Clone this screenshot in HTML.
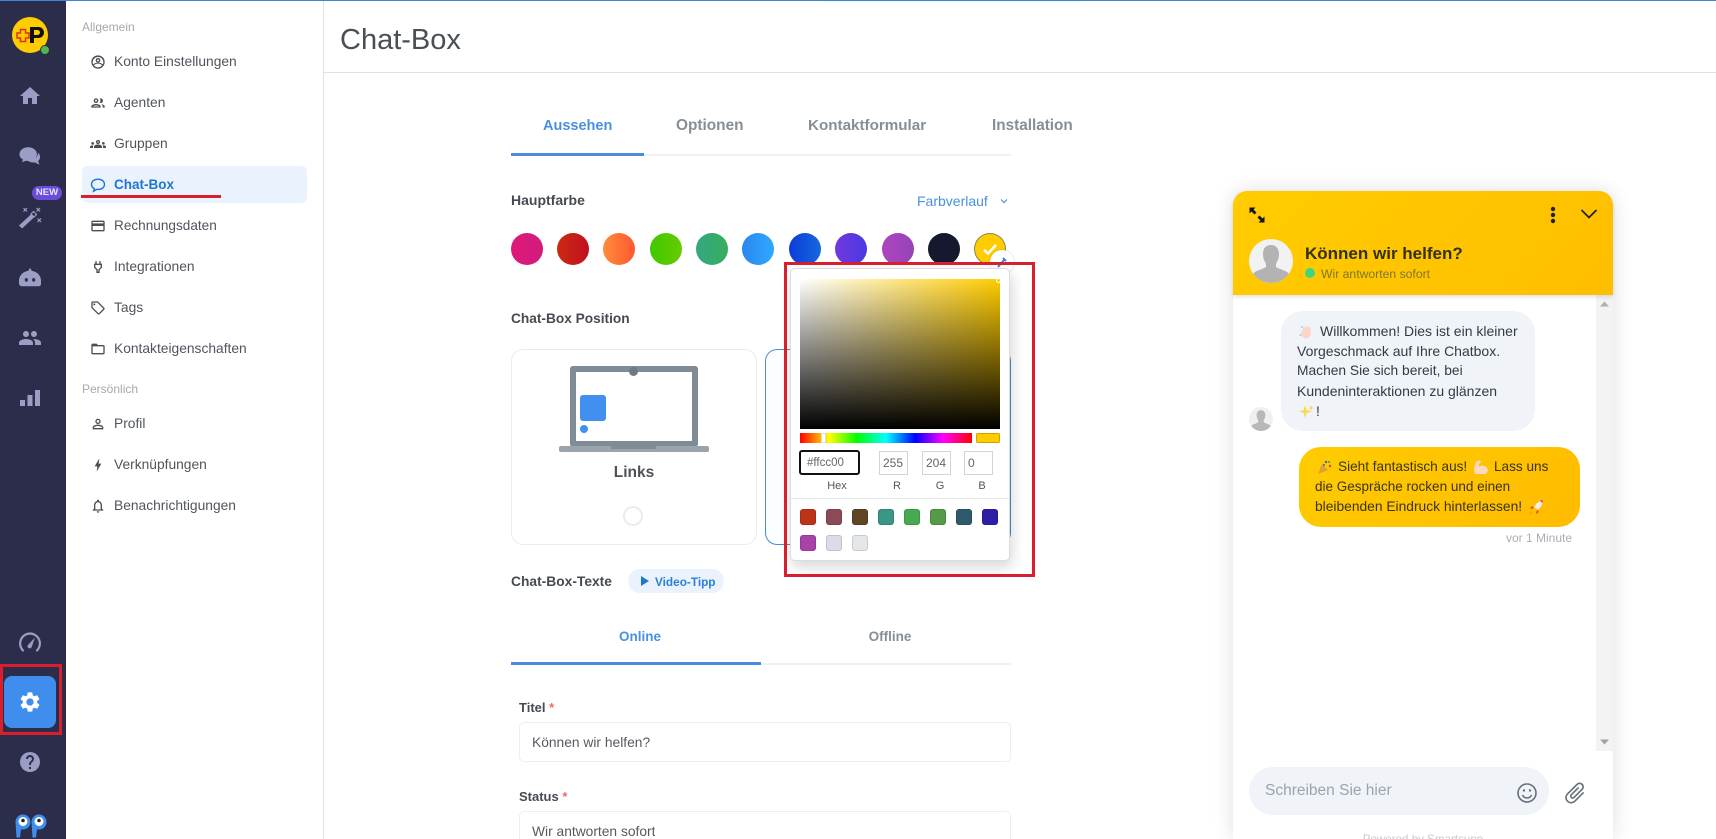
<!DOCTYPE html>
<html lang="de"><head><meta charset="utf-8"><title>Chat-Box</title>
<style>
*{box-sizing:border-box}
html,body{margin:0;padding:0;width:1716px;height:839px;overflow:hidden;background:#fff;font-family:"Liberation Sans",sans-serif;color:#4b5159}
#w{position:relative;width:1716px;height:839px;overflow:hidden;background:#fff}
.a{position:absolute}
.t{position:absolute;white-space:nowrap;line-height:20px;height:20px}
.n{font-size:13.8px;left:114px;color:#50555d}
.lab{font-size:12px;left:82px;color:#a4a9ae}
.h{font-weight:700;font-size:13.7px;color:#464b52}
.ni{position:absolute;left:90px;width:16px;height:16px;fill:#4a4f57}
.ri{position:absolute;fill:#9b9dc4}
.c{position:absolute;top:233px;width:32px;height:32px;border-radius:50%}
.sw{position:absolute;width:16px;height:16px;border-radius:3px;box-shadow:inset 0 0 0 1px rgba(0,0,0,.12)}
.in{position:absolute;border:1px solid #d4d4d4;height:24px;top:451px;font-size:12px;line-height:22px;padding-left:3px;color:#666}
.pl{position:absolute;top:476px;font-size:11px;line-height:20px;color:#555;transform:translateX(-50%)}
.m{font-size:14px;color:#343a45;left:1297px}
.m2{font-size:13.6px;color:#3a3410;left:1315px}
.inp{position:absolute;background:#fff;border:1px solid #eee;border-radius:5px;left:519px;width:492px}
</style></head><body>
<div id="w">

<div class="a" style="left:0;top:0;width:1716px;height:1px;background:#3d86d4;z-index:9"></div>
<div class="a" style="left:825px;top:1px;width:255px;height:2px;background:linear-gradient(#eef1f5,#fff);border-radius:0 0 8px 8px"></div>

<!-- rail -->
<div class="a" style="left:0;top:0;width:66px;height:839px;background:#2c2d4b"></div>
<div class="a" style="left:12px;top:17px;width:36px;height:36px;border-radius:50%;background:#ffcc00"></div>
<svg class="a" style="left:16px;top:26px" width="30" height="19" viewBox="0 0 30 19"><path d="M4.500 3.500h5v3.500h3.500v5H9.500v3.500h-5V12H1V7h3.500z" fill="#ffcc00" stroke="#d8321c" stroke-width="1.500"/><path fill="#111" fill-rule="evenodd" d="M14 1h8.500a5.500 5.500 0 0 1 0 11H18v5h-4zM18 4v5h3.500a2.500 2.500 0 0 0 0-5z"/></svg>
<div class="a" style="left:41px;top:46px;width:8px;height:8px;border-radius:50%;background:#4fb848;box-shadow:0 0 0 1px #2c2d4b"></div>

<svg class="ri" style="left:18px;top:84px" width="24" height="24" viewBox="0 0 24 24"><path d="M10 20v-6h4v6h5v-8h3L12 3 2 12h3v8z"/></svg>
<svg class="ri" style="left:19px;top:145px" width="22" height="22" viewBox="0 0 24 24"><ellipse cx="10" cy="10" rx="9.500" ry="7.500"/><path d="M5 15l-2 4 6-2.500z"/><path d="M20.600 8.500c1.400 1.200 2.400 2.800 2.400 4.600 0 1.800-.9 3.300-2.200 4.400l1.600 4-5.200-2.500c-3.400.4-6.500-.5-8.200-2.500 5.500.6 12-2.500 11.600-8z"/></svg>
<div class="a" style="left:32px;top:186px;width:30px;height:14px;border-radius:7px;background:#6c4ddb;color:#e8e6ff;font-size:9.500px;font-weight:700;line-height:14px;text-align:center">NEW</div>
<svg class="a" style="left:17px;top:205px" width="26" height="24" viewBox="0 0 26 24"><path d="M2 20.500 15 8.500l3 3L5 23.500z" fill="#9b9dc4"/><path d="M14 9l2.500-2.500 3 3L17 12z" fill="#2c2d4b" stroke="#9b9dc4" stroke-width="1.200"/><path d="M6.500 3l3.500 3.500M10 3L6.500 6.500M19.500 3l3.500 3.500M23 3l-3.500 3.500M20.500 13.500l3.500 3.500M24 13.500l-3.500 3.500" stroke="#9b9dc4" stroke-width="1.200" fill="none"/></svg>
<svg class="ri" style="left:19px;top:267px" width="22" height="22" viewBox="0 0 24 24"><path fill-rule="evenodd" d="M12 1l2 3.200c5.200.6 9.500 4.600 10 9.800v4.500c0 1.500-1.200 2.500-2.500 2.500h-19C1.200 20.500 0 19.500 0 18V14c.5-5.200 4.800-9.200 10-9.800zM8 12a1.700 2 0 1 0 0 4 1.700 2 0 0 0 0-4zm8 0a1.700 2 0 1 0 0 4 1.700 2 0 0 0 0-4z"/></svg>
<svg class="ri" style="left:18px;top:326px" width="24" height="24" viewBox="0 0 24 24"><path d="M16 11c1.660 0 2.990-1.340 2.990-3S17.660 5 16 5c-1.660 0-3 1.340-3 3s1.340 3 3 3zm-8 0c1.660 0 2.990-1.340 2.990-3S9.660 5 8 5C6.340 5 5 6.340 5 8s1.340 3 3 3zm0 2c-2.330 0-7 1.170-7 3.500V19h14v-2.500c0-2.330-4.670-3.500-7-3.500zm8 0c-.29 0-.62.02-.97.05 1.160.84 1.970 1.970 1.970 3.450V19h6v-2.500c0-2.330-4.670-3.500-7-3.500z"/></svg>
<svg class="ri" style="left:20px;top:390px" width="20" height="16" viewBox="0 0 20 16"><path d="M0 10h5v6H0zM7.500 5h5v11h-5zM15 0h5v16h-5z"/></svg>

<svg class="a" style="left:19px;top:632px" width="22" height="20" viewBox="0 0 22 20"><path d="M4 18.500A10 10 0 0 1 11 1.500a10 10 0 0 1 7 17" fill="none" stroke="#9b9dc4" stroke-width="2.200" stroke-linecap="round"/><path d="M8.500 13.500 16 5.500l-3.500 10a2.300 2.300 0 0 1-4-2z" fill="#9b9dc4"/></svg>
<div class="a" style="left:0;top:664px;width:62px;height:71px;border:3px solid #d81f2e"></div>
<div class="a" style="left:4px;top:676px;width:52px;height:52px;border-radius:8px;background:#3f8eee"></div>
<svg class="a" style="left:18px;top:690px;fill:#fff" width="24" height="24" viewBox="0 0 24 24"><path d="M19.140 12.940c.04-.3.06-.61.06-.94 0-.32-.02-.64-.07-.94l2.030-1.580c.18-.14.23-.41.12-.61l-1.920-3.320c-.12-.22-.37-.29-.59-.22l-2.390.96c-.5-.38-1.030-.7-1.620-.94l-.36-2.540c-.04-.24-.24-.41-.48-.41h-3.840c-.24 0-.43.17-.47.41l-.36 2.540c-.59.24-1.130.57-1.620.94l-2.390-.96c-.22-.08-.47 0-.59.22L2.740 8.870c-.12.21-.08.47.12.61l2.030 1.580c-.05.3-.09.63-.09.94s.02.64.07.94l-2.030 1.580c-.18.14-.23.41-.12.61l1.920 3.320c.12.22.37.29.59.22l2.390-.96c.5.38 1.030.7 1.620.94l.36 2.540c.05.24.24.41.48.41h3.840c.24 0 .44-.17.47-.41l.36-2.540c.59-.24 1.130-.56 1.620-.94l2.390.96c.22.08.47 0 .59-.22l1.920-3.320c.12-.22.07-.47-.12-.61l-2.010-1.580zM12 15.600c-1.980 0-3.600-1.620-3.600-3.600s1.620-3.600 3.600-3.600 3.600 1.620 3.600 3.600-1.620 3.600-3.600 3.600z"/></svg>
<svg class="a" style="left:18px;top:750px" width="24" height="24" viewBox="0 0 24 24"><circle cx="12" cy="12" r="10" fill="#9b9dc4"/><path fill="#2c2d4b" d="M13 19h-2v-2h2v2zm2.070-7.750l-.9.92C13.450 12.900 13 13.500 13 15h-2v-.5c0-1.100.45-2.100 1.170-2.830l1.240-1.260c.37-.36.59-.86.59-1.410 0-1.100-.9-2-2-2s-2 .9-2 2H8c0-2.210 1.790-4 4-4s4 1.790 4 4c0 .88-.36 1.680-.93 2.250z"/></svg>
<svg class="a" style="left:15px;top:814px" width="32" height="25" viewBox="0 0 32 25"><path d="M.500 8a7.500 7.500 0 0 1 15 0 7.500 7.500 0 0 1-9.500 7.200l-1 8.300H1.500z" fill="#3f8eee"/><path d="M16.500 8a7.500 7.500 0 0 1 15 0 7.500 7.500 0 0 1-9.500 7.200l-1 8.300h-3.500z" fill="#3f8eee"/><circle cx="8" cy="7.500" r="4.500" fill="#fff"/><circle cx="24" cy="7.500" r="4.500" fill="#fff"/><circle cx="8" cy="6.500" r="1.800" fill="#222"/><circle cx="24" cy="6.500" r="1.800" fill="#222"/></svg>

<!-- second nav -->
<div class="a" style="left:323px;top:0;width:1px;height:839px;background:#dfe1e4"></div>
<div class="t lab" style="top:17px">Allgemein</div>
<div class="a" style="left:82px;top:166px;width:225px;height:37px;border-radius:5px;background:#eaf3fd"></div>
<div class="a" style="left:81px;top:195px;width:140px;height:3px;background:#d81f2e"></div>

<svg class="ni" style="top:54px" viewBox="0 0 24 24"><path d="M12 2a10 10 0 1 0 0 20 10 10 0 0 0 0-20zm0 18a8 8 0 0 1-6-2.700c.800-1.700 3.500-2.800 6-2.800s5.200 1.100 6 2.800a8 8 0 0 1-6 2.700zm7.300-4.300c-1.500-1.800-4.700-2.700-7.300-2.700s-5.800.9-7.300 2.700A8 8 0 1 1 19.300 15.700zM12 6a3.500 3.500 0 1 0 0 7 3.500 3.500 0 0 0 0-7zm0 5a1.500 1.500 0 1 1 0-3 1.500 1.500 0 0 1 0 3z"/></svg>
<div class="t n" style="top:52px">Konto Einstellungen</div>
<svg class="ni" style="top:95px" viewBox="0 0 24 24"><path d="M9 12a3.500 3.500 0 1 0 0-7 3.500 3.500 0 0 0 0 7zm0-5a1.500 1.500 0 1 1 0 3 1.500 1.500 0 0 1 0-3zM9 13.500c-2.300 0-7 1.200-7 3.500V19h14v-2c0-2.300-4.700-3.500-7-3.500zM4.300 17c.8-.6 2.900-1.500 4.700-1.500s3.900.9 4.700 1.500zM16 12a3.500 3.500 0 0 0 0-7c-.5 0-1 .1-1.400.3a5.500 5.500 0 0 1 0 6.400c.4.2.9.3 1.400.3zM17 13.600c1.200.8 2 1.900 2 3.400v2h3v-2c0-2-3-3.100-5-3.400z"/></svg>
<div class="t n" style="top:93px">Agenten</div>
<svg class="ni" style="top:136px" viewBox="0 0 24 24"><path d="M12 12.800c1.600 0 3.100.4 4.300.9 1.100.5 1.700 1.600 1.700 2.800V18H6v-1.500c0-1.200.7-2.300 1.700-2.800 1.200-.5 2.700-.9 4.300-.9zM4 13a2 2 0 1 0 0-4 2 2 0 0 0 0 4zm1.100 1.100C4.700 14 4.400 14 4 14c-1 0-1.900.2-2.700.5C.5 14.900 0 15.600 0 16.400V18h4.500v-1.600c0-.8.200-1.600.6-2.300zM20 13a2 2 0 1 0 0-4 2 2 0 0 0 0 4zm4 3.400c0-.8-.5-1.500-1.300-1.900-.8-.3-1.700-.5-2.700-.5-.4 0-.7 0-1.100.1.400.7.600 1.500.6 2.300V18H24zM12 6a3 3 0 1 1 0 6 3 3 0 0 1 0-6zm0 2a1 1 0 1 0 0 2 1 1 0 0 0 0-2z"/></svg>
<div class="t n" style="top:134px">Gruppen</div>
<svg class="a" style="left:90px;top:177px" width="16" height="16" viewBox="0 0 18 18"><path d="M9 2.500C4.800 2.500 1.700 5 1.700 8.300c0 2.100 1.300 3.900 3.300 4.900L4 16l3.700-2.100c.4.100.9.100 1.300.100 4.200 0 7.300-2.400 7.300-5.700S13.200 2.500 9 2.500z" fill="none" stroke="#1f76d2" stroke-width="1.600"/></svg>
<div class="t n" style="top:175px;color:#1f76d2;font-weight:700;font-size:13.500px">Chat-Box</div>
<svg class="ni" style="top:218px" viewBox="0 0 24 24"><path d="M20 4H4c-1.110 0-2 .89-2 2v12c0 1.110.89 2 2 2h16c1.110 0 2-.89 2-2V6c0-1.110-.89-2-2-2zm0 14H4v-6h16v6zm0-10H4V6h16v2z"/></svg>
<div class="t n" style="top:216px;font-size:13.600px">Rechnungsdaten</div>
<svg class="ni" style="top:259px" viewBox="0 0 24 24"><path d="M16 7V3h-2v4h-4V3H8v4H6v6l3.500 3.500V21h5v-4.500L18 13V7zm0 5.200-3.500 3.500V19h-1v-3.300L8 12.200V9h8z"/></svg>
<div class="t n" style="top:257px">Integrationen</div>
<svg class="ni" style="top:300px" viewBox="0 0 24 24"><path d="M21.400 11.600l-9-9C12 2.200 11.500 2 11 2H4c-1.100 0-2 .9-2 2v7c0 .6.200 1.100.6 1.400l9 9c.4.400.9.600 1.400.600s1.100-.2 1.400-.6l7-7c.4-.4.600-.9.600-1.400s-.2-1.100-.6-1.400zM13 20l-9-9V4h7l9 9zM6.500 5A1.500 1.500 0 1 0 6.500 8 1.500 1.500 0 0 0 6.500 5z"/></svg>
<div class="t n" style="top:298px">Tags</div>
<svg class="ni" style="top:341px" viewBox="0 0 24 24"><path d="M20 6h-8l-2-2H4c-1.100 0-2 .9-2 2v12c0 1.100.9 2 2 2h16c1.100 0 2-.9 2-2V8c0-1.100-.9-2-2-2zm0 12H4V8h16v10z"/></svg>
<div class="t n" style="top:339px">Kontakteigenschaften</div>
<div class="t lab" style="top:379px">Persönlich</div>
<svg class="ni" style="top:416px" viewBox="0 0 24 24"><path d="M12 4a4 4 0 1 0 0 8 4 4 0 0 0 0-8zm0 6a2 2 0 1 1 0-4 2 2 0 0 1 0 4zm0 3c-2.700 0-8 1.300-8 4v3h16v-3c0-2.700-5.300-4-8-4zm6 5H6v-1c.2-.7 3.300-2 6-2s5.800 1.300 6 2z"/></svg>
<div class="t n" style="top:414px">Profil</div>
<svg class="ni" style="top:457px" viewBox="0 0 24 24"><path d="M14 2 7 14h4l-1 8 7-12h-4z"/></svg>
<div class="t n" style="top:455px">Verknüpfungen</div>
<svg class="ni" style="top:498px" viewBox="0 0 24 24"><path d="M12 22c1.100 0 2-.9 2-2h-4c0 1.100.9 2 2 2zm6-6v-5c0-3.100-1.600-5.600-4.500-6.300V4a1.500 1.500 0 0 0-3 0v.7C7.600 5.400 6 7.900 6 11v5l-2 2v1h16v-1zm-2 1H8v-6c0-2.500 1.500-4.500 4-4.500s4 2 4 4.500z"/></svg>
<div class="t n" style="top:496px">Benachrichtigungen</div>

<!-- header -->
<div class="a" style="left:324px;top:72px;width:1392px;height:1px;background:#dfe1e4"></div>
<div class="t" style="left:340px;top:25px;height:30px;line-height:30px;font-size:29px;color:#4a4e55">Chat-Box</div>

<!-- tabs -->
<div class="a" style="left:511px;top:154px;width:500px;height:2px;background:#eef0f2"></div>
<div class="a" style="left:511px;top:153px;width:133px;height:3px;background:#4a8cdc"></div>
<div class="t" style="left:543px;top:116px;font-size:14.500px;font-weight:700;color:#4a90e2">Aussehen</div>
<div class="t" style="left:676px;top:116px;font-size:15.400px;font-weight:700;color:#868e96">Optionen</div>
<div class="t" style="left:808px;top:116px;font-size:15.200px;font-weight:700;color:#868e96">Kontaktformular</div>
<div class="t" style="left:992px;top:116px;font-size:15.300px;font-weight:700;color:#868e96">Installation</div>

<div class="t h" style="left:511px;top:190px;font-size:14px">Hauptfarbe</div>
<div class="t" style="left:917px;top:191px;font-size:14px;color:#4a90e2">Farbverlauf</div>
<svg class="a" style="left:1000px;top:197px" width="8" height="8" viewBox="0 0 8 8"><path d="M1 2.500l3 3 3-3" fill="none" stroke="#4a90e2" stroke-width="1.200"/></svg>

<div class="c" style="left:511px;background:linear-gradient(90deg,#e0187a,#d01c7c)"></div>
<div class="c" style="left:557px;background:linear-gradient(90deg,#cc2a12,#c01020)"></div>
<div class="c" style="left:603px;background:linear-gradient(90deg,#ff8c3a,#ff5830)"></div>
<div class="c" style="left:650px;background:linear-gradient(90deg,#40c800,#66cc00)"></div>
<div class="c" style="left:696px;background:linear-gradient(90deg,#36a682,#36ae5c)"></div>
<div class="c" style="left:742px;background:linear-gradient(90deg,#2b86f0,#30a8ff)"></div>
<div class="c" style="left:789px;background:linear-gradient(90deg,#0c3cd8,#1668e0)"></div>
<div class="c" style="left:835px;background:linear-gradient(90deg,#7038e0,#4a3ae0)"></div>
<div class="c" style="left:882px;background:linear-gradient(90deg,#b044c0,#9444b8)"></div>
<div class="c" style="left:928px;background:#15182e"></div>
<div class="c" style="left:974px;background:#ffcc00;box-shadow:inset 0 0 0 1px #8a8a60"></div>
<svg class="a" style="left:982px;top:241px" width="16" height="16" viewBox="0 0 16 16"><path d="M2 9l4 3.500L14 4" fill="none" stroke="#fff" stroke-width="2.600"/></svg>
<div class="a" style="left:990px;top:250px;width:24px;height:24px;border-radius:50%;background:#fff;box-shadow:0 0 2px rgba(0,0,0,.2)"></div>
<svg class="a" style="left:996px;top:256px" width="12" height="12" viewBox="0 0 12 12"><path d="M2 11l6-7M7 2l3 3" stroke="#3f7fe0" stroke-width="2" fill="none"/></svg>

<div class="t h" style="left:511px;top:309px">Chat-Box Position</div>

<!-- cards -->
<div class="a" style="left:511px;top:349px;width:246px;height:196px;border:1px solid #e9ebed;border-radius:12px"></div>
<div class="a" style="left:765px;top:349px;width:246px;height:196px;border:1px solid #4a8cd0;border-radius:12px;background:#fcfdff"></div>
<div class="a" style="left:570px;top:366px;width:128px;height:81px;border:6px solid #7f8c95;border-radius:3px;background:#fff"></div>
<div class="a" style="left:629px;top:367px;width:9px;height:9px;border-radius:50%;background:#6f7b84"></div>
<div class="a" style="left:559px;top:446px;width:150px;height:6px;border-radius:2px;background:#9aa5ab"></div>
<div class="a" style="left:611px;top:446px;width:45px;height:3px;background:#7f8c95"></div>
<div class="a" style="left:580px;top:395px;width:26px;height:26px;border-radius:3px;background:#4190f0"></div>
<div class="a" style="left:580px;top:425px;width:8px;height:8px;border-radius:50%;background:#4190f0"></div>
<div class="t" style="left:511px;width:246px;text-align:center;top:463px;font-size:15.500px;font-weight:700;color:#4d5259">Links</div>
<div class="a" style="left:623px;top:506px;width:20px;height:20px;border-radius:50%;border:2px solid #ececec"></div>

<!-- popover -->
<div class="a" style="left:790px;top:268px;width:220px;height:293px;background:#fff;border:1px solid #dcdcdc;border-radius:5px;box-shadow:2px 6px 14px rgba(0,0,0,.16)"></div>
<div class="a" style="left:800px;top:279px;width:200px;height:150px;background:linear-gradient(to top,#000,rgba(0,0,0,0)),linear-gradient(to right,#fff,#ffcc00)"></div>
<div class="a" style="left:996px;top:278px;width:5px;height:5px;border:1px solid #fff;border-radius:50%"></div>
<div class="a" style="left:800px;top:433px;width:172px;height:10px;background:linear-gradient(90deg,#f00,#ff0 17%,#0f0 33%,#0ff 50%,#00f 67%,#f0f 83%,#f00)"></div>
<div class="a" style="left:821px;top:433px;width:5px;height:10px;background:#fff;border:1px solid #ddd"></div>
<div class="a" style="left:976px;top:433px;width:24px;height:10px;background:#ffcc00;border-radius:2px;box-shadow:inset 0 0 0 1px rgba(0,0,0,.2)"></div>
<div class="a" style="left:799px;top:450px;width:61px;height:25px;border:2px solid #111;border-radius:3px;font-size:11.500px;line-height:23px;padding-left:6px;color:#666">#ffcc00</div>
<div class="in" style="left:879px;width:29px">255</div>
<div class="in" style="left:922px;width:29px">204</div>
<div class="in" style="left:964px;width:29px">0</div>
<div class="pl" style="left:837px">Hex</div><div class="pl" style="left:897px">R</div><div class="pl" style="left:940px">G</div><div class="pl" style="left:982px">B</div>
<div class="a" style="left:791px;top:498px;width:218px;height:1px;background:#e8e8e8"></div>
<div class="sw" style="left:800px;top:509px;background:#bc3418"></div>
<div class="sw" style="left:826px;top:509px;background:#8b4a54"></div>
<div class="sw" style="left:852px;top:509px;background:#604625"></div>
<div class="sw" style="left:878px;top:509px;background:#3a9685"></div>
<div class="sw" style="left:904px;top:509px;background:#46aa50"></div>
<div class="sw" style="left:930px;top:509px;background:#559a48"></div>
<div class="sw" style="left:956px;top:509px;background:#2f5a6b"></div>
<div class="sw" style="left:982px;top:509px;background:#2d1fa5"></div>
<div class="sw" style="left:800px;top:535px;background:#a844a8"></div>
<div class="sw" style="left:826px;top:535px;background:#dcdce6"></div>
<div class="sw" style="left:852px;top:535px;background:#e4e7ea"></div>
<div class="a" style="left:784px;top:262px;width:251px;height:315px;border:3px solid #d81f2e"></div>

<!-- texts section -->
<div class="t h" style="left:511px;top:572px;font-size:13.800px">Chat-Box-Texte</div>
<div class="a" style="left:628px;top:569px;width:96px;height:24px;border-radius:12px;background:#eaf3fd"></div>
<svg class="a" style="left:640px;top:575px" width="10" height="12" viewBox="0 0 10 12"><path d="M1 1l8 5-8 5z" fill="#1f76d2"/></svg>
<div class="t" style="left:655px;top:572px;font-size:11.800px;font-weight:700;color:#2a7fd6">Video-Tipp</div>

<div class="a" style="left:511px;top:663px;width:500px;height:2px;background:#eef0f2"></div>
<div class="a" style="left:511px;top:662px;width:250px;height:3px;background:#4a8cdc"></div>
<div class="t" style="left:515px;width:250px;text-align:center;top:627px;font-size:13.500px;font-weight:700;color:#4a90e2">Online</div>
<div class="t" style="left:765px;width:250px;text-align:center;top:627px;font-size:13.500px;font-weight:700;color:#868e96">Offline</div>

<div class="t h" style="left:519px;top:698px;font-size:13px">Titel <span style="color:#ef6a6a">*</span></div>
<div class="inp" style="top:722px;height:40px"></div>
<div class="t" style="left:532px;top:733px;font-size:13.800px;color:#555a61">Können wir helfen?</div>
<div class="t h" style="left:519px;top:787px;font-size:13px">Status <span style="color:#ef6a6a">*</span></div>
<div class="inp" style="top:811px;height:28px;border-bottom:0;border-radius:5px 5px 0 0"></div>
<div class="t" style="left:532px;top:822px;font-size:13.800px;color:#555a61;height:17px;overflow:hidden">Wir antworten sofort</div>

<!-- chat widget -->
<div class="a" style="left:1233px;top:191px;width:380px;height:648px;background:#fff;border-radius:14px 14px 0 0;box-shadow:0 0 20px rgba(0,0,0,.13)"></div>
<div class="a" style="left:1596px;top:295px;width:17px;height:456px;background:#f3f3f3"></div>
<svg class="a" style="left:1600px;top:301px" width="9" height="6"><path d="M0 5.500L4.500 .5 9 5.500z" fill="#b0b0b0"/></svg>
<svg class="a" style="left:1600px;top:739px" width="9" height="6"><path d="M0 .5L4.500 5.500 9 .5z" fill="#a0a0a0"/></svg>
<div class="a" style="left:1233px;top:191px;width:380px;height:104px;border-radius:14px 14px 0 0;background:linear-gradient(135deg,#ffcc00,#ffbe00);box-shadow:0 2px 4px rgba(0,0,0,.12)"></div>
<svg class="a" style="left:1248px;top:206px" width="18" height="18" viewBox="0 0 18 18"><path d="M1.500 1.500h6l-2 2 3 3-2 2-3-3-2 2zM16.500 16.500h-6l2-2-3-3 2-2 3 3 2-2z" fill="#111"/></svg>
<svg class="a" style="left:1549px;top:206px" width="8" height="18" viewBox="0 0 8 18"><circle cx="4" cy="3" r="2.200" fill="#222"/><circle cx="4" cy="9" r="2.200" fill="#222"/><circle cx="4" cy="15" r="2.200" fill="#222"/></svg>
<svg class="a" style="left:1580px;top:208px" width="18" height="12" viewBox="0 0 18 12"><path d="M1.500 2L9 9.500 16.500 2" fill="none" stroke="#222" stroke-width="1.800"/></svg>
<svg class="a" style="left:1249px;top:239px" width="44" height="44" viewBox="0 0 44 44"><defs><clipPath id="cp"><circle cx="22" cy="22" r="22"/></clipPath></defs><g clip-path="url(#cp)"><rect width="44" height="44" fill="#f2f2f2"/><path d="M22 6c5 0 8 3.500 8 9s-2 7-3 10v3c3 2 8 3 11 5 3 2 4 7 4 11H2c0-4 1-9 4-11 3-2 8-3 11-5v-3c-1-3-3-4-3-10s3-9 8-9z" fill="#b3b3b3"/></g></svg>
<div class="t" style="left:1305px;top:243px;font-size:17px;font-weight:700;color:#33300f;line-height:22px;height:22px">Können wir helfen?</div>
<div class="a" style="left:1305px;top:268px;width:10px;height:10px;border-radius:50%;background:#3fd77e"></div>
<div class="t" style="left:1321px;top:264px;font-size:12.200px;color:#7f7428">Wir antworten sofort</div>

<div class="a" style="left:1281px;top:311px;width:254px;height:120px;background:#f0f4f9;border-radius:22px"></div>
<svg class="a" style="left:1299px;top:323px" width="16" height="16" viewBox="0 0 16 16"><path d="M5 15c-2-1-3-4-3-6 0-1 1-1 1.500 0 0-3 .5-5 1.500-5 .5 0 1 .5 1 1.500C7 4 7.500 3 8 3c.7 0 1 1 1 2 .5-1 1-1.500 1.500-1.500.7 0 1 1.500 1 3 0 3 1.500 4 0 6-1.500 2.500-4 3.500-6.500 2.500z" fill="#fbd5c5"/><circle cx="3" cy="4" r="1" fill="#a8c4ea"/><circle cx="1.500" cy="12" r="1" fill="#a8c4ea"/></svg>
<div class="t m" style="top:321px;left:1320px">Willkommen! Dies ist ein kleiner</div>
<div class="t m" style="top:341px">Vorgeschmack auf Ihre Chatbox.</div>
<div class="t m" style="top:361px;font-size:13.800px">Machen Sie sich bereit, bei</div>
<div class="t m" style="top:381px">Kundeninteraktionen zu glänzen</div>
<svg class="a" style="left:1299px;top:404px" width="15" height="15" viewBox="0 0 15 15"><path d="M6 1l1.500 5L13 7.500 7.500 9 6 14.500 4.500 9 0 7.500 4.500 6z" fill="#fbd85a"/><path d="M12 1l.8 2.200L15 4l-2.200.8L12 7l-.8-2.200L9 4l2.200-.8z" fill="#fbd85a"/></svg>
<div class="t m" style="top:401px;left:1316px">!</div>
<svg class="a" style="left:1249px;top:407px" width="24" height="24" viewBox="0 0 44 44"><defs><clipPath id="cq"><circle cx="22" cy="22" r="22"/></clipPath></defs><g clip-path="url(#cq)"><rect width="44" height="44" fill="#f0f0f0"/><path d="M22 6c5 0 8 3.500 8 9s-2 7-3 10v3c3 2 8 3 11 5 3 2 4 7 4 11H2c0-4 1-9 4-11 3-2 8-3 11-5v-3c-1-3-3-4-3-10s3-9 8-9z" fill="#b8b8b8"/></g></svg>

<div class="a" style="left:1299px;top:447px;width:281px;height:80px;border-radius:22px;background:linear-gradient(135deg,#ffcc00,#ffbb00)"></div>
<svg class="a" style="left:1317px;top:460px" width="15" height="15" viewBox="0 0 15 15"><path d="M1 14l4-10 6 6z" fill="#e0a030"/><circle cx="9" cy="2" r="1.200" fill="#3a5fd0"/><circle cx="13" cy="6" r="1.200" fill="#d03a70"/><circle cx="12" cy="2" r="1" fill="#35a050"/><circle cx="7" cy="5" r="1" fill="#3a5fd0"/></svg>
<div class="t m2" style="top:457px;left:1338px">Sieht fantastisch aus!</div>
<svg class="a" style="left:1473px;top:460px" width="16" height="15" viewBox="0 0 16 15"><path d="M2 14C0 9 2 3 4 1c2-1 4 0 4 1L6 4 6 7c2-2 6-2 8 1 2 3 0 6-3 6z" fill="#fbd9c4"/></svg>
<div class="t m2" style="top:457px;left:1494px">Lass uns</div>
<div class="t m2" style="top:477px;font-size:13.500px">die Gespräche rocken und einen</div>
<div class="t m2" style="top:497px;font-size:13.800px">bleibenden Eindruck hinterlassen!</div>
<svg class="a" style="left:1528px;top:500px" width="16" height="15" viewBox="0 0 16 15"><path d="M15 0c0 4-2 7-5 9.500L6 7.500C8 3.500 11 .5 15 0z" fill="#eee"/><path d="M15 0l-3 .8 2.300 2.300z" fill="#e03a3a"/><path d="M6 8l-4 1 2-3zM9 10l-1 4 3-2z" fill="#e03a3a"/><path d="M4 11l-3 3.500L4.500 13z" fill="#f0a030"/></svg>
<div class="t" style="right:144px;top:528px;font-size:12px;color:#a9aeb6">vor 1 Minute</div>

<div class="a" style="left:1249px;top:767px;width:300px;height:48px;border-radius:24px;background:#f0f4f9"></div>
<div class="t" style="left:1265px;top:781px;font-size:15.500px;color:#9aa3af">Schreiben Sie hier</div>
<svg class="a" style="left:1516px;top:782px" width="22" height="22" viewBox="0 0 22 22"><circle cx="11" cy="11" r="9" fill="none" stroke="#66707e" stroke-width="1.600"/><circle cx="8" cy="8.500" r="1.200" fill="#66707e"/><circle cx="14" cy="8.500" r="1.200" fill="#66707e"/><path d="M6.500 13c1 2 2.700 3 4.500 3s3.500-1 4.500-3" fill="none" stroke="#66707e" stroke-width="1.500"/></svg>
<svg class="a" style="left:1562px;top:780px;transform:rotate(45deg);fill:#66707e" width="26" height="26" viewBox="0 0 24 24"><path d="M16.500 6v11.500c0 2.210-1.790 4-4 4s-4-1.790-4-4V5c0-1.380 1.120-2.500 2.500-2.500s2.500 1.120 2.500 2.500v10.500c0 .55-.45 1-1 1s-1-.45-1-1V6H10v9.500c0 1.380 1.120 2.500 2.500 2.500s2.500-1.120 2.500-2.500V5c0-2.210-1.790-4-4-4S7 2.790 7 5v12.500c0 3.040 2.460 5.500 5.500 5.500s5.500-2.460 5.500-5.500V6h-1.500z"/></svg>
<div class="t" style="left:1233px;width:380px;text-align:center;top:830px;font-size:11.600px;color:#c6c9ce;height:9px;overflow:hidden">Powered by Smartsupp</div>

</div>
</body></html>
